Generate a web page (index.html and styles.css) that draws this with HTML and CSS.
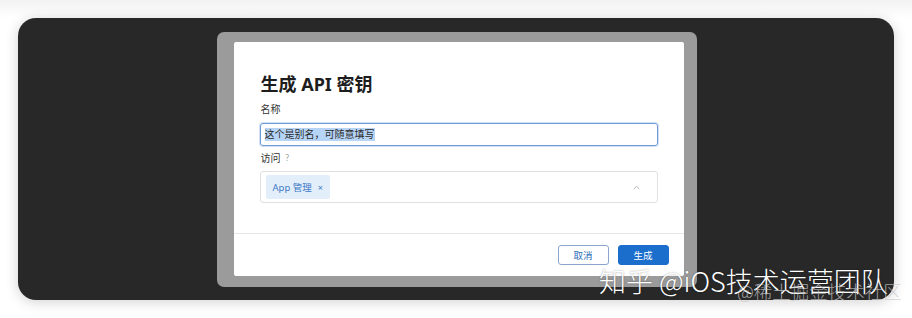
FILE: index.html
```html
<!DOCTYPE html>
<html lang="zh">
<head>
<meta charset="utf-8">
<link rel="stylesheet" href="styles.css">
</head>
<body>
<div class="stage">
  <div class="panel">
    <div class="frame">
      <div class="dialog">
        <div class="body">
          <h1 class="title">生成 API 密钥</h1>
          <div class="label">名称</div>
          <div class="input"><span class="sel">这个是别名，可随意填写</span></div>
          <div class="label label2">访问 <span class="help">?</span></div>
          <div class="select">
            <span class="tag">App 管理 <span class="x">×</span></span>
            <svg class="chev" width="7" height="5" viewBox="0 0 7 5"><path d="M0.8 4.2 L3.5 1.2 L6.2 4.2" fill="none" stroke="#b0b0b0" stroke-width="0.9"/></svg>
          </div>
        </div>
        <div class="footer">
          <button class="btn btn-cancel">取消</button>
          <button class="btn btn-primary">生成</button>
        </div>
      </div>
    </div>
  </div>
  <div class="wm1">知乎 @iOS技术运营团队</div>
  <div class="wm2">@稀土掘金技术社区</div>
</div>
</body>
</html>
```
FILE: styles.css
```css
html, body {
  margin: 0;
  padding: 0;
}
body {
  width: 912px;
  height: 318px;
  background: #ffffff;
  font-family: "Noto Sans", "Noto Sans CJK SC", sans-serif;
  overflow: hidden;
}
.stage {
  position: relative;
  width: 912px;
  height: 318px;
  padding-top: 18px;
  box-sizing: border-box;
  background: linear-gradient(#f2f2f2, #ffffff 18px);
}
.panel {
  margin: 0 18px;
  height: 282px;
  background: #282828;
  border-radius: 18px;
  box-shadow: 0 2px 14px rgba(0,0,0,0.18);
  display: flex;
  justify-content: center;
  padding-top: 14px;
  box-sizing: border-box;
}
.frame {
  width: 480px;
  height: 255px;
  box-sizing: border-box;
  background: #9b9b9b;
  border-radius: 7px;
  padding: 10px 13px 11px 17px;
  margin-left: 1px;
}
.dialog {
  background: #ffffff;
  height: 234px;
  border-radius: 2px;
  display: flex;
  flex-direction: column;
}
.body {
  padding: 30px 26px 0 27px;
  height: 192px;
  box-sizing: border-box;
  border-bottom: 1px solid #e6e6e6;
}
.title {
  margin: 0;
  font-size: 18px;
  line-height: 24px;
  font-weight: 700;
  color: #1d1d1d;
}
.label {
  margin-top: 6px;
  font-size: 10px;
  line-height: 14px;
  color: #333;
  display: flex;
  align-items: center;
}
.label2 {
  margin-top: 5px;
}
.help {
  margin-left: 5px;
  font-size: 8px;
  color: #9a9a9a;
}
.input {
  margin-top: 7px;
  height: 23px;
  box-sizing: border-box;
  border: 1px solid #6f9bd8;
  box-shadow: 0 0 0 1px #cfe0f5;
  border-radius: 3px;
  margin-left: -1px;
  padding-left: 4px;
  display: flex;
  align-items: center;
  font-size: 10px;
  color: #2a2a2a;
}
.sel {
  background: #b6d4f6;
  line-height: 13px;
}
.select {
  margin-top: 6px;
  margin-left: -1px;
  height: 32px;
  box-sizing: border-box;
  border: 1px solid #e0e0e0;
  border-radius: 3px;
  display: flex;
  align-items: center;
  padding: 0 17px 0 5px;
}
.tag {
  height: 24px;
  width: 64px;
  box-sizing: border-box;
  background: #e3eefb;
  color: #3d7bc6;
  font-size: 9.5px;
  display: flex;
  align-items: center;
  padding-left: 7px;
  border-radius: 2px;
}
.x {
  margin-left: 6px;
  font-size: 9px;
}
.chev {
  margin-left: auto;
}
.footer {
  display: flex;
  justify-content: flex-end;
  gap: 9px;
  padding: 11px 15px 0 0;
}
.btn {
  width: 51px;
  height: 20px;
  box-sizing: border-box;
  border-radius: 3px;
  font-family: "Noto Sans CJK SC", sans-serif;
  font-size: 9.5px;
  padding: 0;
  display: flex;
  align-items: center;
  justify-content: center;
}
.btn-cancel {
  background: #fff;
  border: 1px solid #8aa6cc;
  color: #2d6cb8;
}
.btn-primary {
  background: #1c6ecd;
  border: 1px solid #1c6ecd;
  color: #fff;
}
.wm1 {
  position: absolute;
  left: 599px;
  top: 267px;
  font-family: "Noto Sans CJK SC", sans-serif;
  font-weight: 300;
  font-size: 27px;
  line-height: 27px;
  color: #ffffff;
  text-shadow: 0 0 2px rgba(0,0,0,0.4);
  white-space: nowrap;
}
.wm2 {
  position: absolute;
  left: 737px;
  top: 280px;
  font-family: "Noto Sans CJK SC", sans-serif;
  font-weight: 300;
  font-size: 18.5px;
  line-height: 22px;
  color: rgba(200,200,200,0.75);
  white-space: nowrap;
}
```
